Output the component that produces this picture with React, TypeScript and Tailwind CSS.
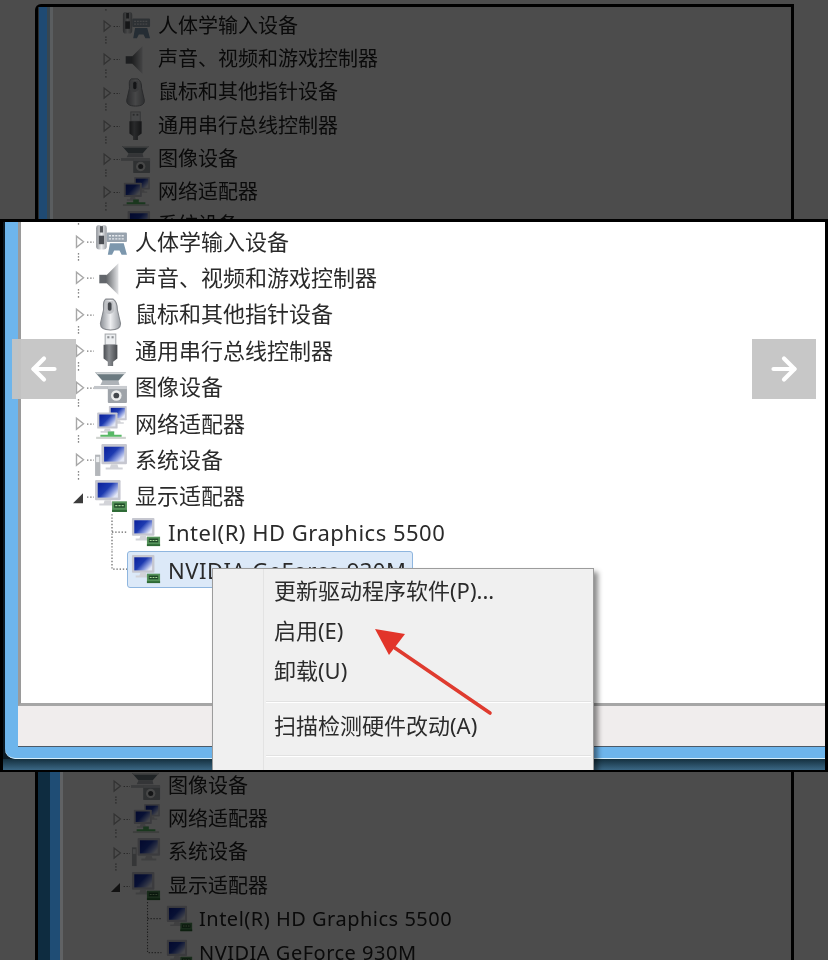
import React from 'react';
import { ArrowLeft, ArrowRight } from 'lucide-react';

type IconName = 'hid' | 'speaker' | 'mouse' | 'usb' | 'image' | 'network' | 'system' | 'display';
type Size = 'big' | 'small';

const Monitor: React.FC<{ x: number; y: number; s?: number }> = ({ x, y, s = 1 }) => (
    <g transform={`translate(${x} ${y}) scale(${s})`}>
        <rect x="0" y="0" width="24" height="19" rx="1" fill="#c6c7d0" />
        <rect x="2.5" y="2.5" width="19" height="14" fill="url(#screen)" />
        <path d="M9 19h6l1 3h4v2H4v-2h4z" fill="#d2d3d8" />
    </g>
);

const Card: React.FC<{ x: number; y: number }> = ({ x, y }) => (
    <g>
        <rect x={x} y={y} width="14" height="10" fill="#55935a" />
        <rect x={x + 2} y={y + 2} width="10" height="4" fill="#1f4a28" />
        <path d={`M${x + 3} ${y + 4}h8`} stroke="#a8d89a" strokeWidth="1.2" strokeDasharray="2 1" />
        <rect x={x} y={y + 8} width="14" height="2" fill="#2e6a35" />
    </g>
);

const DeviceIcon: React.FC<{ name: IconName; className: string }> = ({ name, className }) => (
    <svg viewBox="0 0 32 32" className={`shrink-0 ${className}`}>
        <defs>
            <linearGradient id="screen" x1="0" y1="0" x2="1" y2="0.7">
                <stop offset="0" stopColor="#0a1f9a" />
                <stop offset="0.5" stopColor="#1d3ab0" />
                <stop offset="0.8" stopColor="#8f9fe0" />
                <stop offset="1" stopColor="#e4e8f6" />
            </linearGradient>
            <linearGradient id="metal" x1="0" y1="0" x2="1" y2="0">
                <stop offset="0" stopColor="#8c9096" />
                <stop offset="0.5" stopColor="#eeeff1" />
                <stop offset="1" stopColor="#999da3" />
            </linearGradient>
            <linearGradient id="cone" x1="0" y1="0" x2="1" y2="0">
                <stop offset="0" stopColor="#5e6165" />
                <stop offset="1" stopColor="#e3e4e6" />
            </linearGradient>
            <linearGradient id="plug" x1="0" y1="0" x2="1" y2="0">
                <stop offset="0" stopColor="#4a4d52" />
                <stop offset="0.4" stopColor="#8a8d91" />
                <stop offset="1" stopColor="#45484c" />
            </linearGradient>
        </defs>
        {name === 'hid' && (
            <g>
                <rect x="12" y="8" width="19" height="9" rx="1" fill="#98a3ae" />
                <path d="M14 11h15M14 14h15" stroke="#e6eaee" strokeWidth="1.4" strokeDasharray="2 1" />
                <path d="M15 18h13l3 11h-5l-2-4h-5l-2 4h-4z" fill="#7c97ad" />
                <rect x="2" y="1" width="10" height="23" rx="3" fill="url(#metal)" />
                <rect x="5.5" y="2" width="3" height="6" fill="#55585d" />
                <rect x="4.5" y="11" width="5" height="8" fill="#4a4d53" />
            </g>
        )}
        {name === 'speaker' && (
            <g>
                <rect x="5" y="13" width="7" height="8" fill="#62666b" />
                <path d="M11 14 23 2v30L11 20z" fill="url(#cone)" />
            </g>
        )}
        {name === 'mouse' && (
            <g>
                <path d="M11 2h7c3 2 4 5 4 10l3 13c0 4-3 6-9.500 6S6 29 6 25l3-13c0-5-1-8 2-10z" fill="url(#metal)" stroke="#85888d" strokeWidth="1" />
                <path d="M11 4h7l1 9c-2.500 4-7 4-9.500 0z" fill="#bfc1c5" />
                <rect x="13" y="5" width="3.500" height="8" rx="1.700" fill="#45484d" />
            </g>
        )}
        {name === 'usb' && (
            <g>
                <rect x="10.500" y="1" width="10" height="10" fill="#eceef0" stroke="#a6a9ad" strokeWidth="1" />
                <rect x="12.500" y="3" width="2" height="2" fill="#8d9094" />
                <rect x="16.500" y="3" width="2" height="2" fill="#8d9094" />
                <path d="M9 11h13v13l-4 3v4h-5v-4l-4-3z" fill="url(#plug)" />
            </g>
        )}
        {name === 'image' && (
            <g>
                <path d="M1 2h29l-7 8H8z" fill="#6b7a80" />
                <path d="M1 2h29l-1 2H3z" fill="#d3d6d8" />
                <path d="M8 10h15l1 4H6z" fill="#aeb3b8" />
                <path d="M0 15h16v3H0z" fill="#c3c6ca" />
                <rect x="13" y="15" width="18" height="16" rx="1" fill="#9ea3a9" />
                <rect x="13" y="15" width="18" height="3" fill="#c9ccd0" />
                <circle cx="21" cy="24" r="5" fill="#eceded" />
                <circle cx="21" cy="24" r="2.700" fill="#43474c" />
            </g>
        )}
        {name === 'network' && (
            <g>
                <Monitor x={14} y={0} s={0.7} />
                <Monitor x={3} y={6} s={0.8} />
                <path d="M2 29h28v2H2z" fill="#cfd3cf" />
                <path d="M13 24h6v3h7v2H6v-2h7z" fill="#58b866" />
            </g>
        )}
        {name === 'system' && (
            <g>
                <rect x="1" y="11" width="5" height="20" fill="#b3b6ba" />
                <rect x="2" y="13" width="3" height="5" fill="#eceef0" />
                <Monitor x={7} y={1} />
            </g>
        )}
        {name === 'display' && (
            <g>
                <Monitor x={1} y={1} />
                <Card x={17} y={21} />
            </g>
        )}
    </svg>
);

// the dotted stub and the expander triangle that sit in front of each tree icon
const Connector: React.FC<{ open?: boolean; className: string }> = ({ open, className }) => (
    <svg viewBox="0 0 22 36" className={`shrink-0 ${className}`}>
        {open ? (
            <path d="M1 25 11 15v10z" fill="#3c3c3c" />
        ) : (
            <path d="M4.500 13v11l7-5.500z" fill="#fff" stroke="#a8a8a8" strokeWidth="1.4" />
        )}
        <path d="M15 19h7" stroke="#777" strokeWidth="1.2" strokeDasharray="1.4 1.8" />
        {!open && <path d="M6.500 30v6" stroke="#666" strokeWidth="1.3" strokeDasharray="1.4 1.6" />}
        <path d="M6.500 0v3" stroke="#666" strokeWidth="1.3" strokeDasharray="1.4 1.6" />
    </svg>
);

const ChildConnector: React.FC<{ last?: boolean; className: string }> = ({ last, className }) => (
    <svg viewBox="0 0 16 36" className={`shrink-0 ${className}`}>
        <path d={last ? 'M1 0v18h15' : 'M1 0v36M1 18h15'} fill="none" stroke="#666" strokeWidth="1.2" strokeDasharray="1.4 1.8" />
    </svg>
);

const Row: React.FC<{ size: Size; icon: IconName; label: string; open?: boolean }> = ({ size, icon, label, open }) => (
    <div className={size === 'big' ? 'flex items-center h-[36.4px] text-[22px]' : 'flex items-center h-[33.3px] text-[20px]'}>
        <Connector open={open} className={size === 'big' ? 'w-[22px] h-[36.4px]' : 'w-[20px] h-[33.3px]'} />
        <DeviceIcon name={icon} className={size === 'big' ? 'w-[34px] h-[34px]' : 'w-[30px] h-[30px] ml-[1px]'} />
        <span className="ml-[7px] whitespace-nowrap">{label}</span>
    </div>
);

const ChildRow: React.FC<{ size: Size; label: string; last?: boolean; selected?: boolean }> = ({ size, label, last, selected }) => (
    <div className={size === 'big' ? 'flex items-center h-[36.4px] text-[22px] ml-[39px]' : 'flex items-center h-[33.3px] text-[20px] ml-[36px]'}>
        <ChildConnector last={last} className={size === 'big' ? 'w-[16px] h-[36.4px]' : 'w-[16px] h-[33.3px]'} />
        <div className={`flex items-center rounded-[3px] border pl-[3px] ${selected ? 'h-[37px] mt-[1px] pr-[6px] border-[#8fb6df] bg-[#dce9f8]' : 'h-full pr-[4px] border-transparent'}`}>
            <DeviceIcon name="display" className={size === 'big' ? 'w-[30px] h-[30px]' : 'w-[27px] h-[27px]'} />
            <span className={`${size === 'big' ? 'ml-[7px]' : 'ml-[6px]'} ${selected ? 'pt-[3px]' : 'pt-[1px]'} whitespace-nowrap tracking-[0.5px]`}>{label}</span>
        </div>
    </div>
);

const topRows: { icon: IconName; label: string }[] = [
    { icon: 'hid', label: '人体学输入设备' },
    { icon: 'speaker', label: '声音、视频和游戏控制器' },
    { icon: 'mouse', label: '鼠标和其他指针设备' },
    { icon: 'usb', label: '通用串行总线控制器' },
    { icon: 'image', label: '图像设备' },
    { icon: 'network', label: '网络适配器' },
    { icon: 'system', label: '系统设备' },
];

const PageBehind: React.FC = () => (
    <div className="ml-[35px] mt-[4px] w-[759px] h-[1000px] flex border-l-[3px] border-t-[3px] border-r-[3px] border-black rounded-tl-[6px] bg-white text-[#222]">
        <div className="relative z-[1] w-[25px] shrink-0 flex flex-col">
            <div className="h-[216px] flex">
                <div className="w-[1px] bg-[#2a2e30]" />
                <div className="w-[8px] bg-[#1f4a73]" />
                <div className="w-[3px] bg-[#384650]" />
                <div className="w-[3px] bg-[#5a5d5f]" />
            </div>
            <div className="flex-1 flex">
                <div className="w-[12px] bg-[#0e2c40]" />
                <div className="w-[10px] bg-[#1f4d75]" />
                <div className="w-[3px] bg-[#606264]" />
            </div>
        </div>
        <div className="flex-1 flex flex-col pt-[2px]">
            <div className="pl-[37px]">
                {topRows.map(r => <Row key={r.label} size="small" icon={r.icon} label={r.label} />)}
            </div>
            <div className="pl-[47px] mt-[527px]">
                <Row size="small" icon="image" label="图像设备" />
                <Row size="small" icon="network" label="网络适配器" />
                <Row size="small" icon="system" label="系统设备" />
                <Row size="small" icon="display" label="显示适配器" open />
                <ChildRow size="small" label="Intel(R) HD Graphics 5500" />
                <ChildRow size="small" label="NVIDIA GeForce 930M" last />
            </div>
        </div>
    </div>
);

const ContextMenu: React.FC = () => (
    <div className="absolute left-[209px] top-[346px] w-[382px] h-[240px] flex border border-[#9c9c9c] bg-[#f0f0f0] shadow-[4px_4px_5px_rgba(0,0,0,0.45)] text-[22px] text-[#2b2b2b]">
        <div className="w-[51px] shrink-0 border-r border-[#e3e3e3]" />
        <div className="flex-1 pt-[1px] pl-[10px]">
            <div className="h-[40px] flex items-center whitespace-nowrap">更新驱动程序软件(P)...</div>
            <div className="h-[40px] flex items-center whitespace-nowrap">启用(E)</div>
            <div className="h-[40px] flex items-center whitespace-nowrap">卸载(U)</div>
            <div className="mt-[11px] mb-[2px] -ml-[8px] mr-[2px] h-[2px] bg-[#e2e2e2] border-b border-white" />
            <div className="h-[40px] flex items-center whitespace-nowrap">扫描检测硬件改动(A)</div>
            <div className="mt-[10px] -ml-[8px] mr-[2px] h-[2px] bg-[#e2e2e2] border-b border-white" />
        </div>
    </div>
);

const ZoomedImage: React.FC = () => (
    <div className="absolute left-0 right-0 top-[219px] h-[553px] z-10 overflow-hidden flex flex-col border-t-[3px] border-l-[3px] border-r-[3px] border-b-[2px] border-black bg-[#0c1a24] text-[#2a2a2a]">
        <div className="flex-1 min-h-0 ml-[2px] flex flex-col rounded-bl-[10px] bg-[#6db5ec] border-b border-[#d8f0fc] pl-[13px] pb-[11px]">
            <div className="flex-1 min-h-0 flex flex-col border-b border-[#4c5a68]">
                <div className="flex-1 min-h-0 border-l-[3px] border-[#9a9a9a] border-b-[3px] border-b-[#a6a6a6] bg-white pt-[1px] pl-[51px]">
                    {topRows.map(r => <Row key={r.label} size="big" icon={r.icon} label={r.label} />)}
                    <Row size="big" icon="display" label="显示适配器" open />
                    <ChildRow size="big" label="Intel(R) HD Graphics 5500" />
                    <ChildRow size="big" label="NVIDIA GeForce 930M" last selected />
                </div>
                <div className="h-[40px] bg-[#f0eded]" />
            </div>
        </div>
        <div className="h-[11px] shrink-0 bg-[linear-gradient(to_bottom,#14303f,#3b6784)]" />
        <ContextMenu />
        <svg className="absolute left-[360px] top-[395px] w-[140px] h-[100px]" viewBox="0 0 140 100">
            <path d="M32 31 127 96" stroke="#df3b2f" strokeWidth="3.6" strokeLinecap="round" />
            <path d="M12 12 42 17 26 38z" fill="#e2352a" />
        </svg>
    </div>
);

const NavButton: React.FC<{ side: 'left' | 'right' }> = ({ side }) => (
    <div className={`absolute top-[339px] z-20 w-[64px] h-[60px] flex items-center justify-center bg-[#c4c4c4]/95 text-white ${side === 'left' ? 'left-[12px]' : 'left-[752px]'}`}>
        {side === 'left' ? <ArrowLeft size={36} strokeWidth={2.8} /> : <ArrowRight size={36} strokeWidth={2.8} />}
    </div>
);

const App: React.FC = () => (
    <div className="relative w-full h-[960px] overflow-hidden bg-white blur-[0.7px] font-['Noto_Sans','Noto_Sans_CJK_SC',sans-serif]">
        <PageBehind />
        <div className="absolute inset-0 bg-black/70" />
        <ZoomedImage />
        <NavButton side="left" />
        <NavButton side="right" />
    </div>
);

export default App;
